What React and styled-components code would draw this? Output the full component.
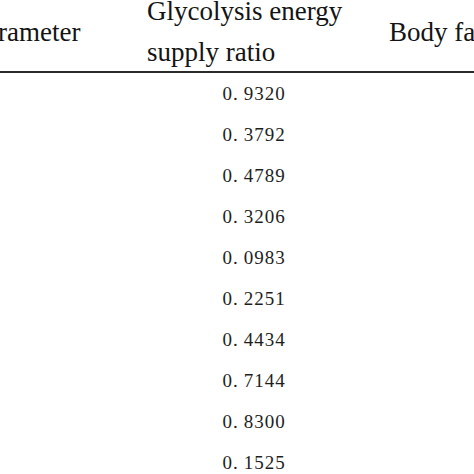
import React from "react";
import styled, { createGlobalStyle } from "styled-components";

const Global = createGlobalStyle`
  html, body { margin: 0; padding: 0; background: #ffffff; overflow: hidden; }
`;

const serif = `"Liberation Serif", "Times New Roman", serif`;

const Viewport = styled.div`
  width: 474px;
  height: 474px;
  overflow: hidden;
  background: #fff;
  color: #161616;
`;

const Table = styled.div`
  margin-left: -29px;
  width: 620px;
  display: grid;
  grid-template-columns: 176px 242px 202px;
`;

const HeaderCell = styled.div`
  height: 78px;
  margin-top: -7px;
  display: flex;
  align-items: center;
  font-family: ${serif};
  font-size: 27px;
  line-height: 41px;
  white-space: nowrap;
  color: #141414;
`;

const Rule = styled.div`
  grid-column: 1 / -1;
  height: 2px;
  background: #2a2a2a;
`;

const Cell = styled.div`
  height: 41px;
  display: flex;
  align-items: center;
  justify-content: ${(p) => (p.$center ? "center" : "flex-start")};
  padding-right: ${(p) => (p.$center ? "28px" : "0")};
  font-family: ${serif};
  font-size: 19px;
  line-height: 41px;
  letter-spacing: 1px;
  color: #1e1e1e;
`;

const Dot = styled.span`
  margin-right: 5px;
`;

const values = [
  "9320",
  "3792",
  "4789",
  "3206",
  "0983",
  "2251",
  "4434",
  "7144",
  "8300",
  "1525",
];

export default function App() {
  return (
    <Viewport>
      <Global />
      <Table>
        <HeaderCell>Parameter</HeaderCell>
        <HeaderCell>
          Glycolysis energy
          <br />
          supply ratio
        </HeaderCell>
        <HeaderCell>Body fat ratio</HeaderCell>
        <Rule />
        {values.map((v) => (
          <React.Fragment key={v}>
            <Cell />
            <Cell $center>
              0<Dot>.</Dot>
              {v}
            </Cell>
            <Cell />
          </React.Fragment>
        ))}
      </Table>
    </Viewport>
  );
}
